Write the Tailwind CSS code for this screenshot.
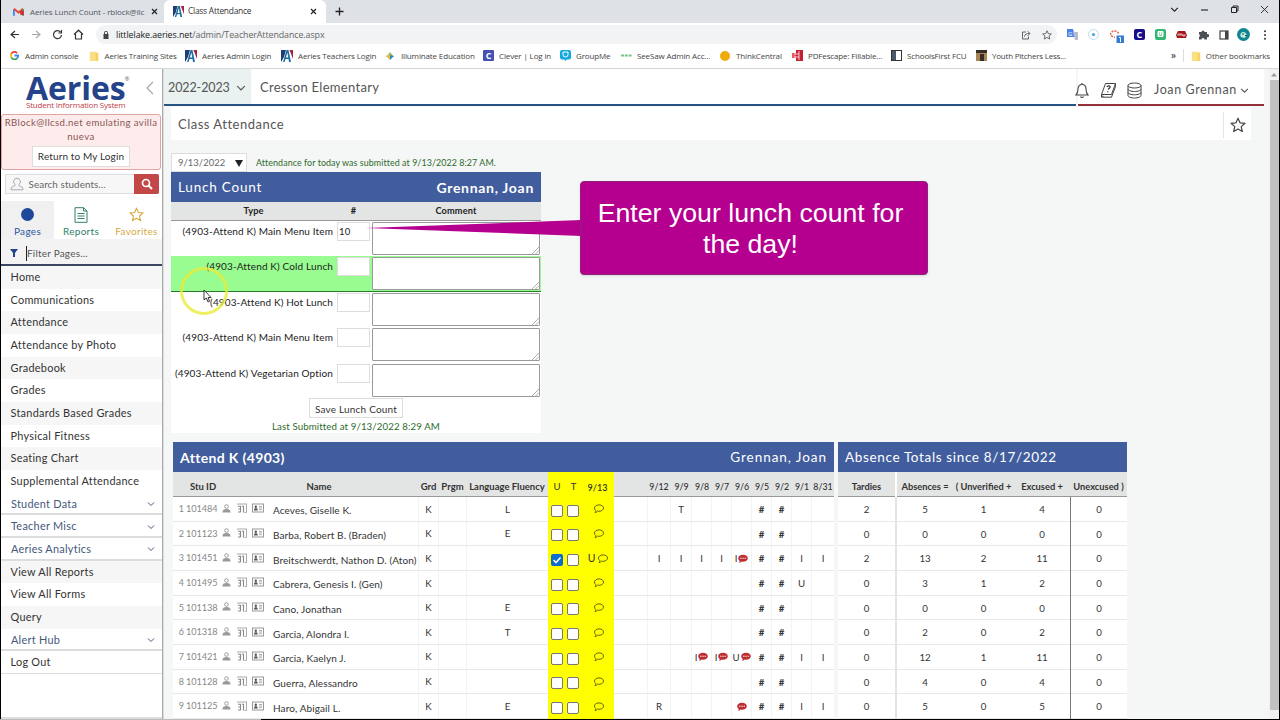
<!DOCTYPE html>
<html lang="en">
<head>
  <meta charset="UTF-8">
  <title>Class Attendance</title>
  <script src="https://cdn.jsdelivr.net/npm/@tailwindcss/browser@4"></script>
</head>
<body class="w-[1280px] h-[720px] overflow-hidden bg-white font-[Lato,sans-serif] text-[#333]">

  <!-- shared icons -->
  <svg class="hidden">
    <symbol id="aeries" viewBox="0 0 12 12"><path d="M0 0h5L3 7l-3 5z" fill="#1d3f72"/><path d="M5.500 0h2l2.500 12H8L7.500 9h-3l-1 3H2z" fill="#1f6ca6"/><path d="M6.300 2.500L5 7.500h2.300z" fill="#fff"/><path d="M8.500 0H12v9z" fill="#a32638"/></symbol>
    <symbol id="folder" viewBox="0 0 12 12"><path d="M1 1h7l1 1h2v10H1z" fill="#fbdf83"/><path d="M8 1v11h3V2H9z" fill="#f5d163"/></symbol>
    <symbol id="chev" viewBox="0 0 8 8"><path d="M1 2.500l3 3 3-3" fill="none" stroke="currentColor" stroke-width="1"/></symbol>
    <symbol id="star" viewBox="0 0 16 16"><path d="M8 1.200l2 4.600 5 .5-3.800 3.300 1.100 4.900L8 11.900l-4.300 2.600 1.100-4.900L1 6.300l5-.5z" fill="none" stroke="currentColor" stroke-width="1.200" stroke-linejoin="round"/></symbol>
    <symbol id="user" viewBox="0 0 10 10"><circle cx="5" cy="2.800" r="2" fill="none" stroke="#999" stroke-width="1.100"/><path d="M.5 9.500c0-3 1.500-4 4.500-4s4.500 1 4.500 4z" fill="#999"/></symbol>
    <symbol id="cal" viewBox="0 0 10 10"><path d="M0 1h10M9.500 1v8.500H7.500" fill="none" stroke="#aaa"/><path d="M1 3.200h2.500v6M1.500 6h2M1 9h2.500M5 3.200h1.500v6.300" fill="none" stroke="#888" stroke-width="1.100"/></symbol>
    <symbol id="card" viewBox="0 0 12 10"><rect x=".5" y="1" width="11" height="8" fill="#fff" stroke="#999"/><circle cx="3.800" cy="3.800" r="1.200" fill="#555"/><path d="M2 7.500c0-2 .6-2.300 1.800-2.300s1.900.3 1.900 2.300z" fill="#555"/><path d="M7 3.500h3M7 5h3M7 6.700h3" stroke="#999" stroke-width=".8"/></symbol>
    <symbol id="bubble" viewBox="0 0 12 10"><path d="M6 .9c2.600 0 4.500 1.400 4.500 3.200S8.600 7.300 6 7.300c-.5 0-1 0-1.400-.2-.7.8-1.600 1.400-2.600 1.500.6-.6.900-1.200.8-2C2 6 1.500 5.100 1.500 4.100 1.500 2.300 3.400.9 6 .9z" fill="none" stroke="#555511" stroke-width=".9"/></symbol>
    <symbol id="redbubble" viewBox="0 0 12 10"><path d="M6 .7c2.800 0 4.800 1.500 4.800 3.500S8.800 7.700 6 7.700c-.5 0-1 0-1.400-.2C3.900 8.300 3 8.900 2 9c.6-.6.800-1.200.7-2C1.800 6.300 1.200 5.300 1.200 4.200 1.200 2.200 3.200.7 6 .7z" fill="#bf2f32"/><path d="M3.200 4.200h1.300M5.400 4.200h1.300M7.600 4.200h1.300" stroke="#fff" stroke-width="1.100"/></symbol>
  </svg>

  <div class="relative flex h-[719px] flex-col border-x border-black">

    <!-- tab strip -->
    <div class="flex h-[23px] shrink-0 bg-[#dee1e6] font-['Open_Sans',sans-serif] text-[8.4px]">
      <div class="flex w-[163px] items-center pl-3 text-[#55585d]">
        <svg class="mr-[6px] h-[9px] w-[11px]" viewBox="0 0 12 9"><path d="M1 9V2" stroke="#4285f4" stroke-width="2"/><path d="M1 1.500l5 4 5-4" fill="none" stroke="#ea4335" stroke-width="2.200"/><path d="M11 9V2" stroke="#34a853" stroke-width="2"/><circle cx="10" cy="6" r="2.500" fill="#c33"/></svg>
        <span class="w-[116px] text-[8px] whitespace-nowrap tracking-[-0.1px]">Aeries Lunch Count - rblock@llc</span>
        <svg class="ml-[5px] size-[7px]" viewBox="0 0 7 7"><path d="M1 1l5 5M6 1L1 6" stroke="#222" stroke-width="1.200"/></svg>
      </div>
      <div class="flex w-[162px] items-center rounded-t-[6px] bg-white pl-[9px]">
        <svg class="mr-[4px] size-[11px]"><use href="#aeries"/></svg>
        <span class="w-[120px] tracking-[-0.23px]">Class Attendance</span>
        <svg class="ml-[2px] size-[7px]" viewBox="0 0 7 7"><path d="M1 1l5 5M6 1L1 6" stroke="#222" stroke-width="1.200"/></svg>
      </div>
      <svg class="mt-[7px] ml-[9px] size-[9px]" viewBox="0 0 9 9"><path d="M4.500 .5v8M.5 4.500h8" stroke="#222" stroke-width="1.300"/></svg>
      <div class="ml-auto flex items-center gap-[21px] pr-[10px] pb-[4px]">
        <svg class="size-[9px] text-[#222]"><use href="#chev"/></svg>
        <svg class="size-[9px]" viewBox="0 0 9 9"><path d="M1 5h7" stroke="#222" stroke-width="1.100"/></svg>
        <svg class="size-[9px]" viewBox="0 0 9 9"><path d="M1.500 2.500h5v5h-5zM3 2.500V1h5v5H6.500" fill="none" stroke="#222"/></svg>
        <svg class="size-[9px]" viewBox="0 0 9 9"><path d="M1 1l7 7M8 1L1 8" stroke="#222" stroke-width=".9"/></svg>
      </div>
    </div>

    <!-- address bar -->
    <div class="flex h-[23px] shrink-0 items-center bg-white pl-2 font-['Open_Sans',sans-serif]">
      <svg class="h-[11px] w-[78px]" viewBox="0 0 78 11" fill="none" stroke="#333" stroke-width="1.200"><path d="M6 2L2 5.500 6 9M2 5.500h8"/><path d="M27 2l4 3.500L27 9M31 5.500h-8" stroke="#aaa"/><path d="M51.500 3A4 4 0 1 0 52.500 6M52.500 1v3h-3"/><path d="M65 5.500l4.500-4.300L74 5.500M66.500 5v5h6V5"/></svg>
      <div class="ml-[9px] flex h-[19px] w-[961px] items-center rounded-full bg-[#f1f3f4] pl-[6px] text-[8.9px] text-[#666]">
        <svg class="mr-[6px] size-[8px]" viewBox="0 0 8 8"><rect x="1.500" y="3" width="5" height="5" fill="#444"/><path d="M2.500 3V1.700a1.500 1.500 0 0 1 3 0V3" fill="none" stroke="#444"/></svg>
        <span class="tracking-[-0.09px]"><span class="text-[#222]">littlelake.aeries.net</span>/admin/TeacherAttendance.aspx</span>
        <svg class="mr-[11px] ml-auto size-[10px] text-[#555]" viewBox="0 0 10 10"><path d="M5 2H1.500v7h6V6.500M3.500 6.500c.3-2.500 2-3 5-3M6.500 1.200L9 3.500 6.500 6" fill="none" stroke="currentColor" stroke-width=".9"/></svg>
        <svg class="mr-[5px] size-[10px] text-[#444]"><use href="#star"/></svg>
      </div>
      <div class="ml-[10px] flex items-center gap-[10.3px]">
        <svg class="size-[11px]" viewBox="0 0 11 11"><path d="M0 0h6l2 8H0z" fill="#4a80e8"/><path d="M6 3h5v8H8z" fill="#b4bccb"/><text x="1" y="6.500" font-size="6" fill="#fff">G</text></svg>
        <svg class="size-[11px]" viewBox="0 0 11 11"><circle cx="5.500" cy="5.500" r="5" fill="none" stroke="#acd4ec" stroke-width=".8"/><circle cx="5.500" cy="5.500" r="1.600" fill="#4ba4d9"/></svg>
        <svg class="mt-[4px] h-[13px] w-[14px]" viewBox="0 0 14 13"><path d="M8.500 3.500A4 3 0 1 0 5 7" fill="none" stroke="#df6755" stroke-width="1.600" stroke-dasharray="2 1"/><rect x="6.500" y="5.500" width="7.500" height="7.500" fill="#347bd1"/><path d="M9 7.500h1.500V12" fill="none" stroke="#fff"/></svg>
        <span class="flex size-[11px] items-center justify-center rounded-[2px] bg-[#180c8a] text-[9px] font-bold text-white">C</span>
        <svg class="size-[11px]" viewBox="0 0 11 11"><rect width="11" height="11" rx="2" fill="#35b774"/><rect x="2.500" y="2" width="6" height="6" rx="1" fill="#fff"/><path d="M4 4h.8M6.300 4h.8M4 5.800q1.500 1 3 0" stroke="#35b774" fill="none"/></svg>
        <svg class="size-[11px]" viewBox="0 0 11 11"><path d="M2 2h7l2 4-1 3H1L0 6z" fill="#a3141c"/><path d="M2 7V5h2v2M4 5h2v2M7 5v2h2V5" fill="none" stroke="#fff" stroke-width=".7"/></svg>
        <svg class="size-[11px]" viewBox="0 0 11 11"><path d="M1 3h2.500a1.500 1.500 0 1 1 3 0H9v2.200a1.500 1.500 0 1 1 0 2.800v2.500H6.500a1.500 1.500 0 0 0-3 0H1V8a1.500 1.500 0 0 0 0-2.800z" fill="#4c4f54"/></svg>
        <svg class="size-[10px]" viewBox="0 0 10 10"><rect x="1" y="1" width="8" height="8" fill="none" stroke="#444" stroke-width="1.200"/><path d="M6 1h3v8H6z" fill="#444"/></svg>
        <svg class="-ml-[2px] size-[13px]" viewBox="0 0 13 13"><circle cx="6.500" cy="6.500" r="6.500" fill="#128592"/><path d="M4 9C2 6 5 2.500 8 4.500s1 5-1 5.500" fill="#c3e7df"/><path d="M5 6h2M8 7.500h2" stroke="#095560"/></svg>
        <svg class="ml-[2px] h-[10px] w-[4px]" viewBox="0 0 4 10" fill="#333"><circle cx="2" cy="1.300" r="1"/><circle cx="2" cy="5" r="1"/><circle cx="2" cy="8.700" r="1"/></svg>
      </div>
    </div>

    <!-- bookmarks -->
    <div class="flex h-[23px] shrink-0 items-center border-b border-[#d5d7da] bg-white pb-[3px] pl-[9px] font-['Open_Sans',sans-serif] text-[8px] tracking-[-0.14px] whitespace-nowrap text-[#444]">
      <span class="flex w-[79px] items-center gap-[6px]"><svg class="size-[9px]" viewBox="0 0 10 10" fill="none" stroke-width="2"><path d="M8 2.300A4 4 0 0 0 1.500 3" stroke="#ea4335"/><path d="M1.500 3a4 4 0 0 0 0 4" stroke="#fbbc05"/><path d="M1.500 7A4 4 0 0 0 8 8" stroke="#34a853"/><path d="M8 8a4 4 0 0 0 1-3H5" stroke="#4285f4"/></svg>Admin console</span>
      <span class="flex w-[96px] items-center gap-[5.500px]"><svg class="size-[10px]"><use href="#folder"/></svg>Aeries Training Sites</span>
      <span class="flex w-[96px] items-center gap-[5px]"><svg class="size-[12px]"><use href="#aeries"/></svg>Aeries Admin Login</span>
      <span class="flex w-[104px] items-center gap-[5px]"><svg class="size-[12px]"><use href="#aeries"/></svg>Aeries Teachers Login</span>
      <span class="flex w-[98px] items-center gap-[6px]"><svg class="size-[10px]" viewBox="0 0 10 10"><path d="M5 1l4 5H1z" fill="#8fc35a"/><path d="M1 5l4-2v6z" fill="#f1b545"/><path d="M9 5L5 9V4z" fill="#338bc4"/></svg>Illuminate Education</span>
      <span class="flex w-[77px] items-center gap-[5px]"><span class="flex size-[11px] items-center justify-center rounded-[1px] bg-[#4651b5] text-[9px] font-bold text-white">C</span>Clever | Log in</span>
      <span class="flex w-[61px] items-center gap-[5px]"><svg class="size-[11px]" viewBox="0 0 11 11"><rect width="11" height="9.500" rx="2" fill="#12aade"/><path d="M4 9h3l-1.500 2z" fill="#12aade"/><path d="M3 2v2.500a2.500 2.500 0 0 0 5 0V2z" fill="none" stroke="#fff"/></svg>GroupMe</span>
      <span class="flex w-[99px] items-center gap-[5px]"><svg class="size-[11px]" viewBox="0 0 11 11"><path d="M0 5.500h11" stroke="#77c488" stroke-width="2" stroke-dasharray="3 .8"/></svg>SeeSaw Admin Acc...</span>
      <span class="flex w-[72px] items-center gap-[6px]"><span class="size-[10px] rounded-full bg-[#efab0a]"></span>ThinkCentral</span>
      <span class="flex w-[99px] items-center gap-[5px]"><svg class="size-[11px]" viewBox="0 0 11 11"><path d="M4 0h7v11H4z" fill="#c71f30"/><path d="M0 3h4v5H0z" fill="#e25c62"/><path d="M2 4h5M2 7h5M7 1v9" stroke="#fff" stroke-width=".8"/></svg>PDFescape: Fillable...</span>
      <span class="flex w-[85px] items-center gap-[5px]"><svg class="size-[11px]" viewBox="0 0 11 11"><rect x=".5" y=".5" width="10" height="10" fill="#fff" stroke="#333"/><path d="M1 1h4v9H1z" fill="#4b5868"/></svg>SchoolsFirst FCU</span>
      <span class="flex items-center gap-[5px] tracking-[-0.22px]"><svg class="size-[11px]" viewBox="0 0 11 11"><rect width="11" height="11" fill="#a78554"/><path d="M0 0h11v3H0zM4 4h4v7H4z" fill="#352d26"/></svg>Youth Pitchers Less...</span>
      <span class="ml-auto pr-[7px] text-[10px] text-[#222]">»</span>
      <span class="flex h-[13px] items-center gap-[5px] border-l border-[#ddd] pr-[9px] pl-[7px] text-[8px] tracking-[-0.1px]"><svg class="size-[10px]"><use href="#folder"/></svg>Other bookmarks</span>
    </div>

    <div class="flex min-h-0 flex-1">

      <!-- sidebar -->
      <aside class="flex w-[162px] shrink-0 flex-col border-r border-[#aaa] bg-white">
        <div class="flex h-[45px] shrink-0 items-start pl-[25px]">
          <div class="w-[108px] pt-[2px]">
            <div class="flex h-[29px] font-['Open_Sans',sans-serif] text-[32px] leading-[33px] font-bold tracking-[-0.1px] text-[#24438a]">Aeries<span class="mt-[5px] -ml-px text-[6px] leading-[6px] font-normal text-[#666]">®</span></div>
            <div class="font-['Open_Sans',sans-serif] text-[8px] leading-[9px] tracking-[-0.2px] whitespace-nowrap text-[#c04048]">Student Information System</div>
          </div>
          <svg class="mt-[12px] ml-[12px] h-[14px] w-[8px]" viewBox="0 0 8 14"><path d="M7 1L1 7l6 6" fill="none" stroke="#aaa" stroke-width="1.300"/></svg>
        </div>
        <div class="mr-[1px] h-[56px] shrink-0 rounded-[3px] border border-[#dfa5a5] bg-[#feecec] text-center text-[9.6px] leading-[14px] tracking-[0.4px] text-[#855]">
          <div class="pt-px whitespace-nowrap">RBlock@llcsd.net emulating avilla</div><div>nueva</div>
          <span class="mt-[2px] inline-block h-[21px] border border-[#ddd] bg-white px-[5px] text-[10px] leading-[19px] tracking-[0.12px] text-[#333]">Return to My Login</span>
        </div>
        <div class="mt-[4px] ml-[4px] flex h-[20px] w-[154px] shrink-0 border border-[#ddd] bg-[#f7f7f7]">
          <svg class="mt-[2px] ml-[4px] size-[14px]" viewBox="0 0 14 14"><path d="M7 1.200a3.500 3.500 0 0 1 2 6.300v1.300c2.500.7 4 1 4 4H1c0-3 1.500-3.300 4-4V7.500a3.500 3.500 0 0 1 2-6.300z" fill="none" stroke="#aaa"/></svg>
          <span class="ml-[4.500px] flex-1 text-[9.8px] leading-[19px] tracking-[0.1px] text-[#666]">Search students...</span>
          <span class="-my-px -mr-px flex w-[25px] items-center justify-center rounded-r-[2px] bg-[#c24848]"><svg class="size-[12px]" viewBox="0 0 12 12"><circle cx="5" cy="5" r="3.500" fill="none" stroke="#fff" stroke-width="1.700"/><path d="M7.500 7.500l3.500 3.500" stroke="#fff" stroke-width="2"/></svg></span>
        </div>
        <div class="mt-[7px] grid h-[38px] shrink-0 grid-cols-[53px_54px_57px] text-center text-[10px] leading-[14px] tracking-[0.3px]">
          <div class="flex flex-col items-center bg-[#f0f0f1] pt-[7px] text-[#2a56a0]"><span class="mb-[3px] size-[13px] rounded-full bg-[#20489a]"></span>Pages</div>
          <div class="flex flex-col items-center pt-[6px] text-[#328068]"><svg class="mb-[1px] h-[16px] w-[14px]" viewBox="0 0 14 16" fill="none" stroke="#328068"><path d="M1 .7h8.500L13 4v11.300H1zM9.500 .7V4H13M3.500 6.500h7M3.500 9h7M3.500 11.500h7"/></svg>Reports</div>
          <div class="flex flex-col items-center pt-[6px] text-[#d9a93f]"><svg class="mb-[2px] size-[15px]"><use href="#star"/></svg>Favorites</div>
        </div>
        <div class="flex h-[27px] shrink-0 items-center border-b-2 border-[#3b4664] bg-[#f3f3f4] pt-[3px] pl-[9px] text-[10px] tracking-[0.2px] text-[#555]">
          <svg class="mr-[8px] size-[8px]" viewBox="0 0 8 8"><path d="M0 0h8L5 4v4H3V4z" fill="#24438a"/></svg>
          <span class="border-l border-[#222]">Filter Pages...</span>
        </div>
        <nav id="menu" class="text-[10.9px] tracking-[0.27px]"></nav>
        <div class="mt-auto h-[2px] w-full bg-[#ddd]"></div>
      </aside>

      <!-- content -->
      <main class="flex min-w-0 flex-1 flex-col border-l border-[#ddd] bg-[#f5f6f6]">
        <header class="flex h-[37px] shrink-0 text-[13px] tracking-[0.3px] text-[#555]">
          <div class="flex w-[912px] border-b-2 border-[#285283] bg-white">
            <span class="flex w-[87px] items-center border-r border-[#eee] bg-[#e9f1f1] pt-[3px] pl-[4px] text-[12.5px] tracking-[-0.1px] whitespace-nowrap">2022-2023<svg class="mr-[4px] ml-auto size-[10px] shrink-0"><use href="#chev"/></svg></span>
            <span class="flex items-center pt-[3px] pl-[9px]">Cresson Elementary</span>
          </div>
          <div class="ml-[2px] flex w-[186px] items-center border-b-2 border-[#943039] bg-white pt-[7px] text-[12.5px]">
            <svg class="-ml-[3px] h-[17px] w-[14px]" viewBox="0 0 14 17"><path d="M1 13c1.500-1.500 2-3 2-6 0-3 1.700-4.500 4-4.500S11 4 11 7c0 3 .5 4.500 2 6zM7 2.500V1M5.500 14.500a1.600 1.600 0 0 0 3 0" fill="none" stroke="#444" stroke-width="1.100"/></svg>
            <svg class="ml-[11px] size-[17px]" viewBox="0 0 17 17"><path d="M5.500 1.500h10l-4 11h-10zM1.500 12.500v2.700h10l4-10.700v-3M1.500 14l2 .3" fill="none" stroke="#444"/><path d="M7 5c.5-1.500 3.500-1.500 3 .3-.3 1-1.500 1-1.700 2.400M7.800 9.200v1" fill="none" stroke="#333" stroke-width="1.200"/></svg>
            <svg class="ml-[10px] h-[17px] w-[15px]" viewBox="0 0 15 17" fill="none" stroke="#444"><ellipse cx="7.500" cy="3.500" rx="6.500" ry="2.500"/><path d="M1 3.500v10c0 1.400 3 2.500 6.500 2.500S14 15 14 13.500v-10M1 7c0 1.400 3 2.500 6.500 2.500S14 8.400 14 7M1 10.300c0 1.400 3 2.500 6.500 2.500S14 11.700 14 10.300"/></svg>
            <span class="ml-[12px] tracking-[0.6px] whitespace-nowrap">Joan Grennan</span>
            <svg class="ml-[3px] size-[9px]"><use href="#chev"/></svg>
          </div>
          <div class="flex-1"></div>
          <div class="w-[10px] bg-[#f1f1f1] pt-[3px]"><svg class="mb-[3px] ml-[1px] h-[5px] w-[8px]" viewBox="0 0 8 5"><path d="M1 4.500l3-3.500 3 3.500z" fill="#999"/></svg><div class="ml-px h-[26px] bg-[#c1c1c1]"></div></div>
        </header>

        <div class="flex min-h-0 flex-1">
          <div class="flex flex-1 flex-col pl-[7px]">
            <div class="mt-[1px] flex h-[33px] w-[1080px] items-center bg-white pt-[2px] pl-[7px] text-[13px] tracking-[0.5px] text-[#555]">
              Class Attendance
              <span class="ml-auto flex h-[26px] w-[28px] items-center justify-center border-l border-[#e5e5e5]"><svg class="size-[16px] text-[#444]"><use href="#star"/></svg></span>
            </div>

            <div class="mt-[13px] flex h-[19px] items-center text-[8.9px] tracking-[0.08px] text-[#2c6a2c]">
              <div class="flex h-[19px] w-[76px] items-center justify-between border border-[#ddd] bg-white pt-px pr-[3px] pl-[6px] text-[9.4px] text-[#666]">9/13/2022<svg class="h-[7px] w-[8px]" viewBox="0 0 8 7"><path d="M0 0h8L4 7z" fill="#222"/></svg></div>
              <span class="ml-[9px] pt-[1px]">Attendance for today was submitted at 9/13/2022 8:27 AM.</span>
            </div>

            <section class="h-[261px] w-[370px] shrink-0 bg-white text-[10px] tracking-[0.13px] text-[#222]">
              <div class="flex h-[30px] items-center justify-between bg-[#415d9d] px-[7px] text-[13.5px] tracking-[0.8px] text-white"><span>Lunch Count</span><b class="text-[14px] tracking-[0.7px]">Grennan, Joan</b></div>
              <div class="grid h-[19px] grid-cols-[165px_35px_170px] items-center border-b border-[#999] bg-[#e3e4e4] text-center text-[9.2px] font-bold"><span>Type</span><span>#</span><span>Comment</span></div>
              <div id="lunch"></div>
              <div class="flex flex-col items-center text-[9.7px] text-[#2c6a2c]">
                <span class="h-[20px] border border-[#ddd] px-[5px] text-[10px] leading-[20px] tracking-[0.2px] text-[#333]">Save Lunch Count</span>
                <span class="mt-px leading-[14px] tracking-[0.1px]">Last Submitted at 9/13/2022 8:29 AM</span>
              </div>
            </section>

            <section class="mt-[9px] ml-[2px] flex gap-[4px] text-[9.7px] text-[#333]">
              <div class="w-[661px]">
                <div class="flex h-[30px] items-center justify-between bg-[#415d9d] px-[7px] text-[13.5px] tracking-[0.95px] text-white"><b class="text-[14px] tracking-[0.35px]">Attend K (4903)</b><span>Grennan, Joan</span></div>
                <div class="grid h-[25px] grid-cols-[13px_34px_48px_150px_21px_27px_82px_66px_33px_23px_21px_20px_20px_20px_20px_20px_20px_23px] items-center border-b border-[#999] bg-[#e3e4e4] pt-[5px] text-center text-[9.5px] font-bold whitespace-nowrap">
                  <span></span><span>Stu ID</span><span></span><span class="pr-[48px]">Name</span><span>Grd</span><span>Prgm</span><span>Language Fluency</span>
                  <div class="z-10 -mt-[5px] grid h-[25px] grid-cols-[18px_15px_33px] items-center bg-[#ffff00] pt-[6px] font-normal"><span>U</span><span>T</span><span class="text-[9px] font-semibold">9/13</span></div>
                  <span></span>
                  <div class="col-span-9 grid grid-cols-[24px_21px_20px_20px_20px_20px_20px_20px_22px] text-[8.8px] font-medium"><span>9/12</span><span>9/9</span><span>9/8</span><span>9/7</span><span>9/6</span><span>9/5</span><span>9/2</span><span>9/1</span><span>8/31</span></div>
                </div>
                <div id="students"></div>
              </div>
              <div class="w-[289px]">
                <div class="flex h-[30px] items-center bg-[#415d9d] px-[7px] text-[13.5px] tracking-[0.65px] text-white">Absence Totals since 8/17/2022</div>
                <div class="grid h-[25px] grid-cols-[57px_2px_56px_61px_56px_57px] items-center border-b border-[#999] bg-[#e3e4e4] pt-[5px] text-center text-[9.3px] font-bold whitespace-nowrap">
                  <span>Tardies</span><span class="-mt-[5px] h-[25px] bg-white"></span><span>Absences =</span><span>( Unverified +</span><span>Excused +</span><span>Unexcused )</span>
                </div>
                <div id="totals"></div>
              </div>
            </section>
          </div>
          <div class="w-[10px] bg-[#f1f1f1]"><div class="ml-px h-[604px] bg-[#c1c1c1]"></div></div>
        </div>
      </main>
    </div>

    <!-- callout -->
    <svg class="absolute top-[215px] left-[364px] h-[26px] w-[217px]" viewBox="0 0 217 26"><path d="M1 13L217 5v16z" fill="#b5008f"/></svg>
    <div class="absolute top-[181px] left-[579px] flex h-[94px] w-[348px] items-center justify-center rounded-[4px] border border-[#8d2378] bg-[#b5008f] pt-[2px] pr-[7px] text-center font-['Liberation_Sans',sans-serif] text-[26.7px] leading-[31px] whitespace-nowrap text-white shadow">Enter your lunch count for<br>the day!</div>

    <!-- pointer highlight -->
    <div class="absolute top-[267px] left-[179px] size-[48px] rounded-full border-[3px] border-[#e9ec3c]/80"></div>
    <svg class="absolute top-[289px] left-[202px] h-[14px] w-[9px]" viewBox="0 0 9 14"><path d="M1 1v10l2.300-2L5 13l1.500-.7L5 8.500h3z" fill="#fff" stroke="#222" stroke-width=".9"/></svg>
  </div>
  <div class="h-px bg-black pr-[1019px]"><div class="h-px bg-[#bbb]"></div></div>

  <script>
    const menu = ['Home', 'Communications', 'Attendance', 'Attendance by Photo', 'Gradebook', 'Grades', 'Standards Based Grades', 'Physical Fitness', 'Seating Chart', 'Supplemental Attendance', '>Student Data', '>Teacher Misc', '>Aeries Analytics', 'View All Reports', 'View All Forms', 'Query', '>Alert Hub', 'Log Out'];
    document.getElementById('menu').innerHTML = menu.map((m, i) => {
      if (m[0] === '>')
        return `<div class="flex h-[22.67px] items-center justify-between border-b-2 border-[#ddd] pt-[2px] pr-[7px] pl-[10px] text-[#44587c]">${m.slice(1)}<svg class="size-[8px]"><use href="#chev"/></svg></div>`;
      const bg = m === 'Log Out' ? 'border-b border-[#ddd]' : (i < 10 ? i % 2 === 0 : i % 2 === 1) ? 'bg-[#f6f6f6]' : 'bg-white';
      return `<div class="flex h-[22.67px] items-center pl-[9.5px] ${bg}">${m}</div>`;
    }).join('');

    const lunch = [['Main Menu Item', '10'], ['Cold Lunch', ''], ['Hot Lunch', ''], ['Main Menu Item', ''], ['Vegetarian Option', '']];
    document.getElementById('lunch').innerHTML = lunch.map(([type, n], i) => `
      <div class="grid h-[35.4px] grid-cols-[166px_36px_167px] pt-[1px] ${i === 1 ? 'border-b border-[#287a28] bg-[#98fc90]' : ''}">
        <span class="pt-[2px] pr-[4px] text-right leading-[14px] whitespace-nowrap">(4903-Attend K) ${type}</span>
        <span class="h-[19px] w-[33px] border border-[#ddd] bg-white pl-[1px] text-[9.5px] leading-[18px]">${n}</span>
        <span class="-ml-px flex h-[33px] items-end justify-end rounded-[1px] border border-[#999] bg-white"><svg class="size-[7px]" viewBox="0 0 7 7"><path d="M0 7l7-7M3.500 7L7 3.500" stroke="#999" stroke-width=".8"/></svg></span>
      </div>`).join('');

    // [id, name, language fluency, today, nine past days, totals]; a trailing * adds a comment bubble
    const students = [
      ['101484', 'Aceves, Giselle K.', 'L', '', ',T,,,,#,#,,', [2, 5, 1, 4, 0]],
      ['101123', 'Barba, Robert B. (Braden)', 'E', '', ',,,,,#,#,,', [0, 0, 0, 0, 0]],
      ['101451', 'Breitschwerdt, Nathon D. (Aton)', '', 'U', 'I,I,I,I,I*,#,#,I,I', [2, 13, 2, 11, 0]],
      ['101495', 'Cabrera, Genesis I. (Gen)', '', '', ',,,,,#,#,U,', [0, 3, 1, 2, 0]],
      ['101138', 'Cano, Jonathan', 'E', '', ',,,,,#,#,,', [0, 0, 0, 0, 0]],
      ['101318', 'Garcia, Alondra I.', 'T', '', ',,,,,#,#,,', [0, 2, 0, 2, 0]],
      ['101421', 'Garcia, Kaelyn J.', '', '', ',,I*,I*,U*,#,#,I,I', [0, 12, 1, 11, 0]],
      ['101128', 'Guerra, Alessandro', '', '', ',,,,,#,#,,', [0, 4, 0, 4, 0]],
      ['101125', 'Haro, Abigail L.', 'E', '', 'R,,,,*,#,#,I,I', [0, 5, 0, 5, 0]]
    ];
    const box = on => on
      ? '<span class="mx-auto flex size-[12px] items-center justify-center rounded-[2px] bg-[#0a6cce]"><svg class="size-[10px]" viewBox="0 0 10 10"><path d="M1.500 5l2.500 2.500L8.500 2.500" fill="none" stroke="#fff" stroke-width="1.600"/></svg></span>'
      : '<span class="mx-auto size-[12px] rounded-[2px] border border-[#777] bg-white"></span>';
    const day = d => `<span class="flex h-full items-center justify-center border-l border-[#f3f3f3] pt-[1px] ${d === '#' ? 'font-bold' : ''}">${d.replace('*', '')}${d.includes('*') ? '<svg class="-mr-[1px] h-[10px] w-[12px] shrink-0"><use href="#redbubble"/></svg>' : ''}</span>`;
    document.getElementById('students').innerHTML = students.map(([id, name, lang, today, days], i) => `
      <div class="grid h-[24.67px] grid-cols-[13px_34px_48px_150px_21px_27px_82px_66px_33px_23px_21px_20px_20px_20px_20px_20px_20px_23px] items-center border-b border-[#e8e8e8] bg-white text-center whitespace-nowrap">
        <span class="pr-[2px] text-right text-[9px] text-[#888]">${i + 1}</span>
        <span class="pr-[3px] text-right text-[9.2px] tracking-[-0.1px] text-[#888]">${id}</span>
        <span class="flex items-center justify-between pr-[4px] pb-px pl-[2px]"><svg class="size-[9px]"><use href="#user"/></svg><svg class="size-[10px]"><use href="#cal"/></svg><svg class="h-[10px] w-[12px]"><use href="#card"/></svg></span>
        <span class="pt-[4px] pl-[5px] text-left text-[10px] tracking-[0.1px]">${name}</span>
        <span class="flex h-full items-center justify-center border-x border-[#f3f3f3]">K</span><span></span>
        <span class="flex h-full items-center justify-center border-l border-[#f3f3f3]">${lang}</span>
        <div class="z-10 -mb-px grid h-[24.67px] grid-cols-[17px_16px_33px] items-center bg-[#ffff00]">
          <span class="flex pt-[3px] pl-[1px]">${box(today === 'U')}</span><span class="flex pt-[3px]">${box(false)}</span>
          <span class="flex items-center justify-center gap-[2px] pl-[2px] text-[10.5px]">${today}<svg class="h-[10px] w-[12px]"><use href="#bubble"/></svg></span>
        </div>
        <span></span>${days.split(',').map(day).join('')}
      </div>`).join('');

    document.getElementById('totals').innerHTML = students.map(s => `
      <div class="grid h-[24.67px] grid-cols-[57px_2px_56px_61px_56px_57px] items-center border-b border-[#e8e8e8] bg-white text-center">
        <span>${s[5][0]}</span><span class="h-full bg-[#e3e4e4]"></span><span>${s[5][1]}</span><span>${s[5][2]}</span><span>${s[5][3]}</span>
        <span class="flex h-[24.67px] items-center justify-center border-l border-[#777]">${s[5][4]}</span>
      </div>`).join('');
  </script>
</body>
</html>
